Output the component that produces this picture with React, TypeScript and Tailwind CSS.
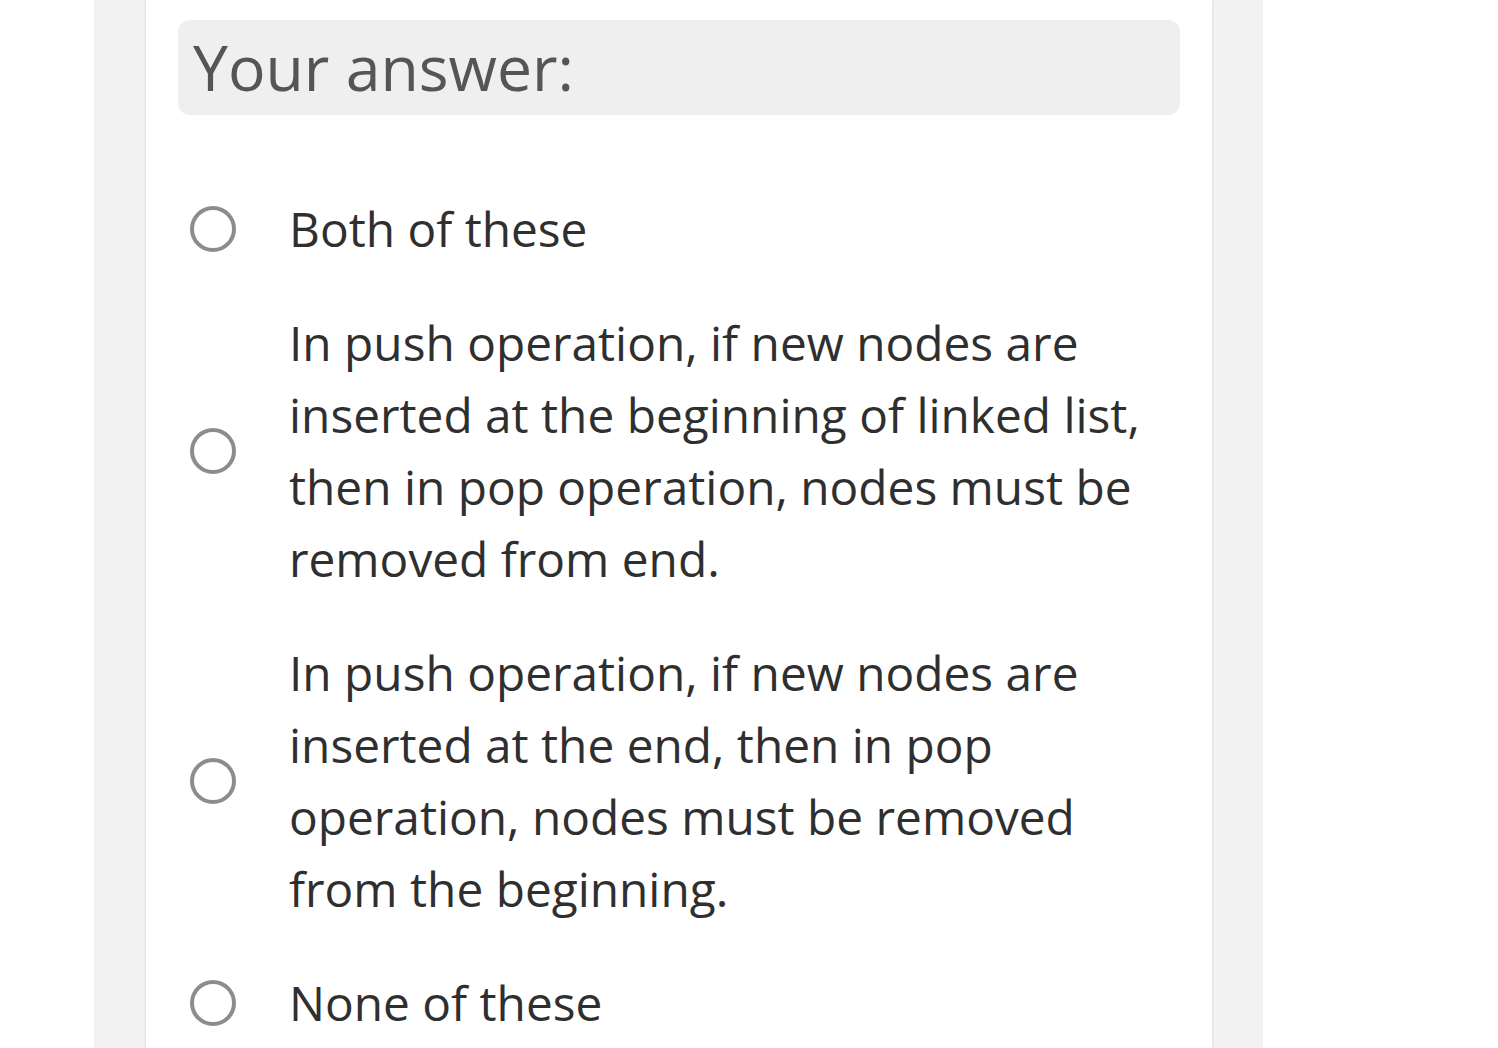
import React from 'react';

const options = [
  'Both of these',
  'In push operation, if new nodes are inserted at the beginning of linked list, then in pop operation, nodes must be removed from end.',
  'In push operation, if new nodes are inserted at the end, then in pop operation, nodes must be removed from the beginning.',
  'None of these',
];

export default function App() {
  return (
    <div
      className="h-[1048px] overflow-hidden bg-white"
      style={{ fontFamily: '"Open Sans", "Noto Sans", sans-serif' }}
    >
      <div className="ml-[94px] h-full w-[1169px] bg-[#f2f2f2] pl-[51px] pr-[50px]">
        {/* Card */}
        <div className="h-full border-x border-[#e4e4e4] bg-white px-[32px] pt-[20px] shadow-[0_0_3px_rgba(0,0,0,0.06)]">
          {/* Answer box */}
          <div className="flex h-[95px] items-center rounded-[12px] bg-[#efefef] pl-[15px]">
            <span className="text-[62.5px] leading-none text-[#555555]">Your answer:</span>
          </div>

          {/* Options */}
          <div className="mt-[78px] flex flex-col gap-[42px] pl-[12px]">
            {options.map((text, i) => (
              <label key={i} className="flex items-center">
                <span className="h-[46px] w-[46px] flex-shrink-0 rounded-full border-[4px] border-[#8c8c8c]" />
                <span className="ml-[53px] w-[890px] text-[47.8px] leading-[72px] text-[#2f2f2f]">
                  {text}
                </span>
              </label>
            ))}
          </div>
        </div>
      </div>
    </div>
  );
}
